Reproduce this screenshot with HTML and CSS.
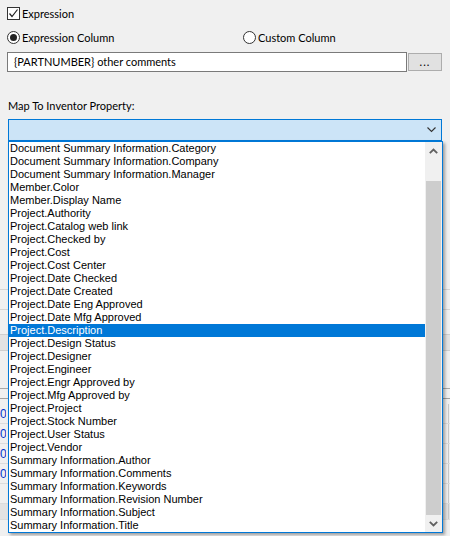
FILE: index.html
```html
<!DOCTYPE html>
<html>
<head>
<meta charset="utf-8">
<link rel="stylesheet" href="styles.css">
</head>
<body>
<div class="form">
  <div class="row check-row">
    <span class="checkbox"><svg width="11" height="11" viewBox="0 0 11 11"><polyline points="1.5,5.5 4,8.5 9.5,1.5" fill="none" stroke="#222" stroke-width="1.2"/></svg></span>
    <span class="lbl">Expression</span>
  </div>
  <div class="row radio-row">
    <div class="radio-opt">
      <span class="radio on"><span class="dot"></span></span>
      <span class="lbl">Expression Column</span>
    </div>
    <div class="radio-opt custom">
      <span class="radio"></span>
      <span class="lbl">Custom Column</span>
    </div>
  </div>
  <div class="row input-row">
    <div class="textbox">{PARTNUMBER} other comments</div>
    <div class="btn">...</div>
  </div>
  <div class="map-label">Map To Inventor Property:</div>
  <div class="combo">
    <svg class="chev" width="9" height="6" viewBox="0 0 9 6"><polyline points="0.5,0.5 4.5,4.5 8.5,0.5" fill="none" stroke="#333" stroke-width="1.1"/></svg>
  </div>
</div>

<div class="under">
  <div class="band b1"></div>
  <div class="band b2"></div>
  <div class="band b3"></div>
  <div class="band gray"></div>
  <div class="band b4"></div>
  <div class="band b5"></div>
  <div class="grid">
    <div class="grow"><span class="num">0</span><span class="cell"></span></div>
    <div class="grow"><span class="num">0</span><span class="cell"></span></div>
    <div class="grow"><span class="num">0</span><span class="cell"></span></div>
    <div class="grow"><span class="num">0</span><span class="cell"></span></div>
    <div class="grow"><span class="num"></span><span class="cell"></span></div>
    <div class="grow head"><span class="num"></span><span class="cell"></span></div>
  </div>
</div>

<div class="dropdown">
  <ul class="items">
    <li>Document Summary Information.Category</li>
    <li>Document Summary Information.Company</li>
    <li>Document Summary Information.Manager</li>
    <li>Member.Color</li>
    <li>Member.Display Name</li>
    <li>Project.Authority</li>
    <li>Project.Catalog web link</li>
    <li>Project.Checked by</li>
    <li>Project.Cost</li>
    <li>Project.Cost Center</li>
    <li>Project.Date Checked</li>
    <li>Project.Date Created</li>
    <li>Project.Date Eng Approved</li>
    <li>Project.Date Mfg Approved</li>
    <li class="sel">Project.Description</li>
    <li>Project.Design Status</li>
    <li>Project.Designer</li>
    <li>Project.Engineer</li>
    <li>Project.Engr Approved by</li>
    <li>Project.Mfg Approved by</li>
    <li>Project.Project</li>
    <li>Project.Stock Number</li>
    <li>Project.User Status</li>
    <li>Project.Vendor</li>
    <li>Summary Information.Author</li>
    <li>Summary Information.Comments</li>
    <li>Summary Information.Keywords</li>
    <li>Summary Information.Revision Number</li>
    <li>Summary Information.Subject</li>
    <li>Summary Information.Title</li>
  </ul>
  <div class="scrollbar">
    <div class="sb-btn"><svg width="9" height="6" viewBox="0 0 9 6"><polyline points="0.8,5.2 4.5,1.5 8.2,5.2" fill="none" stroke="#606060" stroke-width="1.8"/></svg></div>
    <div class="sb-track"><div class="sb-thumb"></div></div>
    <div class="sb-btn"><svg width="9" height="6" viewBox="0 0 9 6"><polyline points="0.8,0.8 4.5,4.5 8.2,0.8" fill="none" stroke="#606060" stroke-width="1.8"/></svg></div>
  </div>
</div>
</body>
</html>
```

FILE: styles.css
```css
html, body {
  margin: 0;
  padding: 0;
}
body {
  width: 450px;
  height: 536px;
  overflow: hidden;
  background: #f0f0f0;
  font-family: "Lato", "Liberation Sans", sans-serif;
  font-size: 11px;
  color: #000;
  position: relative;
}
.form {
  padding: 7px 8px 0 7px;
}
.row {
  display: flex;
  align-items: center;
}
.check-row {
  height: 13px;
}
.checkbox {
  box-sizing: border-box;
  width: 13px;
  height: 13px;
  border: 1px solid #333;
  background: #fff;
  display: flex;
  align-items: center;
  justify-content: center;
}
.lbl {
  margin-left: 2px;
  line-height: 14px;
}
.radio-row {
  margin-top: 11px;
  height: 13px;
}
.radio-opt {
  display: flex;
  align-items: center;
}
.radio-opt.custom {
  margin-left: auto;
  width: 199px;
}
.radio {
  box-sizing: border-box;
  width: 13px;
  height: 13px;
  border: 1px solid #333;
  border-radius: 50%;
  background: #fff;
  display: flex;
  align-items: center;
  justify-content: center;
}
.dot {
  width: 7px;
  height: 7px;
  border-radius: 50%;
  background: #222;
}
.input-row {
  margin-top: 8px;
  height: 20px;
  align-items: stretch;
}
.textbox {
  box-sizing: border-box;
  width: 400px;
  height: 20px;
  border: 1px solid #7a7a7a;
  background: #fff;
  padding: 0 0 0 6px;
  line-height: 18px;
}
.btn {
  box-sizing: border-box;
  width: 34px;
  height: 18px;
  margin: 1px 0 0 1px;
  border: 1px solid #adadad;
  background: #e1e1e1;
  text-align: center;
  line-height: 16px;
  font-size: 11px;
  letter-spacing: 1px;
}
.map-label {
  margin: 27px 0 0 1px;
  line-height: 14px;
}
.combo {
  box-sizing: border-box;
  margin: 6px 0 0 1px;
  height: 22px;
  border: 1px solid #0078d7;
  background: #cce4f7;
  display: flex;
  align-items: center;
  justify-content: flex-end;
  padding-right: 5px;
}
.chev {
  display: block;
}

/* content underneath the dropped list */
.band {
  box-sizing: border-box;
}
.b1 { height: 149px; border-bottom: 1px solid #d5d5d5; }
.b2 { height: 20px; border-bottom: 1px solid #d5d5d5; }
.b3 { height: 24px; }
.gray { height: 17px; background: #e3e3e3; border-top: 1px solid #cfcfcf; border-bottom: 1px solid #cfcfcf; }
.b4 { height: 38px; border-bottom: 1px solid #a8a8a8; }
.b5 { height: 9px; }
.grid {
  border-top: 1px solid #a0a0a0;
  padding-top: 5px;
}
.grow {
  display: flex;
  height: 20px;
  border-bottom: 1px solid #dcdcdc;
  box-sizing: border-box;
}
.grow.head {
  background: #e3e3e3;
  height: 16px;
}
.num {
  width: 6px;
  color: #0033cc;
  text-align: right;
  font-family: "Liberation Sans", sans-serif;
  font-size: 12px;
  line-height: 20px;
  overflow: hidden;
  flex: none;
}
.cell {
  flex: 1;
  border-right: 1px solid #c8c8c8;
  margin-right: 1px;
}

/* dropped-down list (overlay) */
.dropdown {
  position: absolute;
  left: 8px;
  top: 141px;
  width: 435px;
  height: 392px;
  box-sizing: border-box;
  border: 1px solid #0078d7;
  background: #fff;
  display: flex;
  box-shadow: 2px 2px 3px rgba(0, 0, 0, 0.35);
}
.items {
  list-style: none;
  margin: 0;
  padding: 0;
  flex: 1;
  font-family: "Liberation Sans", sans-serif;
  font-size: 11px;
}
.items li {
  height: 13px;
  line-height: 13px;
  padding-left: 1px;
  white-space: nowrap;
}
.items li.sel {
  background: #0078d7;
  color: #fff;
}
.scrollbar {
  width: 17px;
  background: #f0f0f0;
  display: flex;
  flex-direction: column;
}
.sb-btn {
  height: 17px;
  display: flex;
  align-items: center;
  justify-content: center;
  flex: none;
}
.sb-track {
  flex: 1;
  display: flex;
  flex-direction: column;
  padding: 22px 1px 0 1px;
}
.sb-thumb {
  flex: 1;
  background: #cdcdcd;
}
```
